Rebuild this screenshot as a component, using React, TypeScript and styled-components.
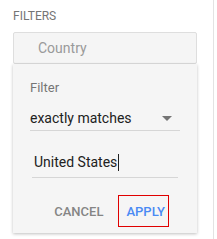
import React from "react";
import styled, { createGlobalStyle } from "styled-components";

const GlobalStyle = createGlobalStyle`
  html, body {
    margin: 0;
    padding: 0;
    background: #ffffff;
    font-family: Roboto, "Liberation Sans", Arial, sans-serif;
  }
`;

const Sidebar = styled.div`
  width: 214px;
  height: 239px;
  border-right: 1px solid #e3e3e3;
  padding: 9px 0 0 13px;
  box-sizing: border-box;
`;

const Heading = styled.div`
  font-size: 12px;
  line-height: 14px;
  color: #757575;
  font-weight: 400;
  margin-bottom: 9px;
`;

const Chip = styled.div`
  width: 184px;
  height: 32px;
  box-sizing: border-box;
  border: 1px solid #dedede;
  border-radius: 2px;
  background: #f5f5f5;
  display: flex;
  align-items: center;
  padding-left: 24px;
  font-size: 14px;
  color: #9a9a9a;
`;

const Panel = styled.div`
  width: 184px;
  height: 169px;
  box-sizing: border-box;
  background: #f5f5f5;
  box-shadow: 0 1px 3px rgba(0, 0, 0, 0.25);
  padding: 16px 17px 6px 17px;
  display: flex;
  flex-direction: column;
`;

const Label = styled.div`
  font-size: 13px;
  line-height: 15px;
  color: #757575;
  margin-bottom: 13px;
`;

const Select = styled.div`
  display: flex;
  align-items: center;
  justify-content: space-between;
  height: 20px;
  padding-bottom: 2px;
  border-bottom: 1px solid #d6d6d6;
  font-size: 14px;
  line-height: 20px;
  color: #212121;
`;

const Arrow = styled.span`
  width: 0;
  height: 0;
  border-left: 5px solid transparent;
  border-right: 5px solid transparent;
  border-top: 5px solid #757575;
  margin-right: 8px;
`;

const Input = styled.div`
  margin: 21px 2px 0 2px;
  height: 20px;
  padding: 0 0 5px 2px;
  border-bottom: 1px solid #d6d6d6;
  font-size: 14px;
  line-height: 20px;
  color: #212121;
  display: flex;
  align-items: center;
`;

const Caret = styled.span`
  width: 1px;
  height: 17px;
  background: #212121;
  margin-left: 1px;
`;

const Actions = styled.div`
  display: flex;
  justify-content: flex-end;
  align-items: center;
  gap: 7px;
  margin-top: 17px;
  padding-right: 11px;
`;

const Button = styled.button<{ $primary?: boolean }>`
  height: 32px;
  box-sizing: border-box;
  padding: ${(p) => (p.$primary ? "0 3px 0 7px" : "0 7px")};
  border: 1px solid ${(p) => (p.$primary ? "#e00000" : "transparent")};
  background: transparent;
  font-family: Roboto, "Liberation Sans", Arial, sans-serif;
  font-size: 13px;
  font-weight: 500;
  color: ${(p) => (p.$primary ? "#4a8af4" : "#858585")};
  cursor: pointer;
`;

export default function App() {
  return (
    <>
      <GlobalStyle />
      <Sidebar>
        <Heading>FILTERS</Heading>
        <Chip>Country</Chip>
        <Panel>
          <Label>Filter</Label>
          <Select>
            exactly matches
            <Arrow />
          </Select>
          <Input>
            United States
            <Caret />
          </Input>
          <Actions>
            <Button>CANCEL</Button>
            <Button $primary>APPLY</Button>
          </Actions>
        </Panel>
      </Sidebar>
    </>
  );
}
